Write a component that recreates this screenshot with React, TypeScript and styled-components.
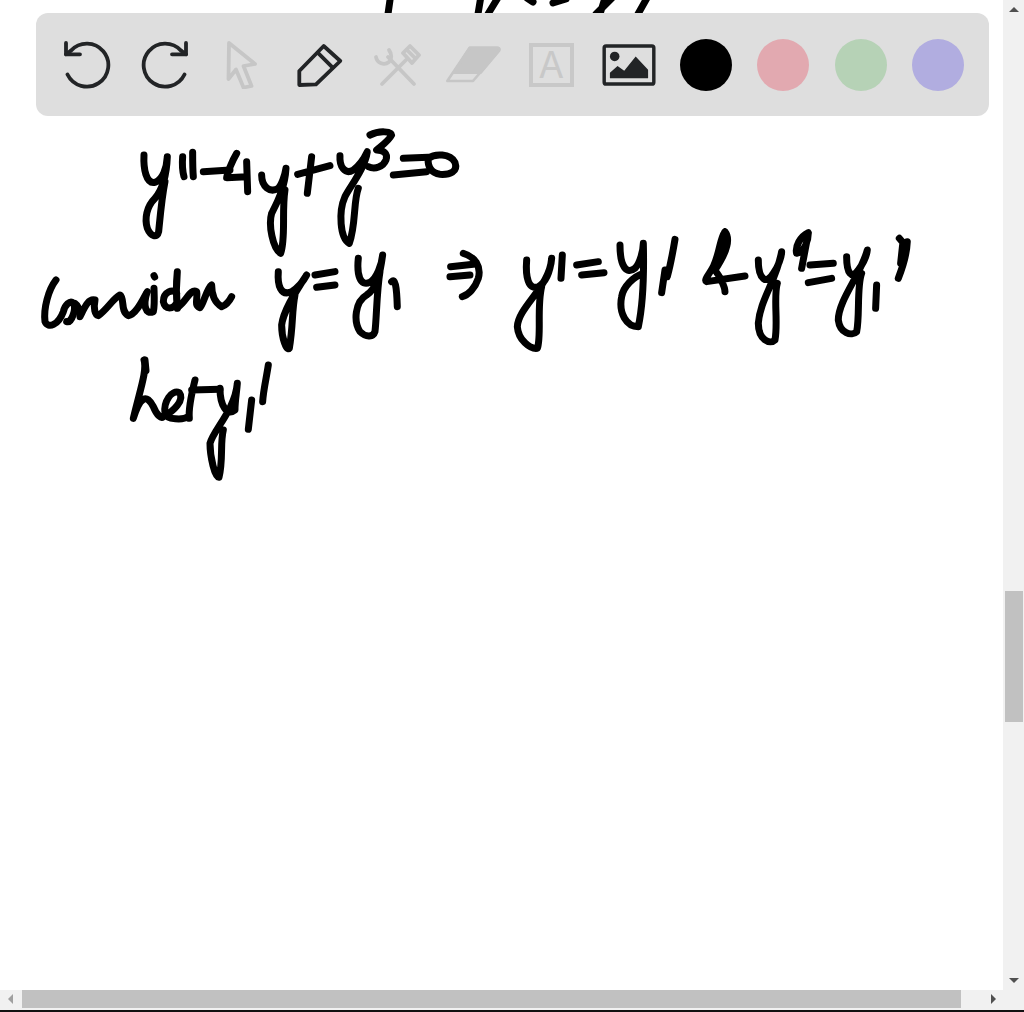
import React from 'react';
import styled, { createGlobalStyle } from 'styled-components';

const GlobalStyle = createGlobalStyle`
  html, body {
    margin: 0;
    padding: 0;
    overflow: hidden;
    background: #fff;
    font-family: "Liberation Sans", Arial, sans-serif;
  }
`;

const Frame = styled.div`
  width: 1024px;
  height: 1012px;
  display: flex;
  flex-direction: column;
  overflow: hidden;
`;

const Body = styled.div`
  flex: 1;
  min-height: 0;
  display: flex;
`;

const Board = styled.main`
  flex: 1;
  position: relative;
  overflow: hidden;
  background: #fff;
`;

const Ink = styled.svg`
  display: block;
  width: 1003px;
  height: 990px;
  fill: none;
  stroke: #000;
  stroke-linecap: round;
  stroke-linejoin: round;
`;

const Toolbar = styled.div`
  position: absolute;
  top: 13px;
  left: 36px;
  width: 953px;
  height: 103px;
  box-sizing: border-box;
  padding-left: 12.5px;
  display: flex;
  align-items: center;
  background: #dedede;
  border-radius: 12px;
`;

const Tool = styled.div`
  width: 77.35px;
  height: 52px;
  flex: none;
  display: flex;
  align-items: center;
  justify-content: center;
`;

const Icon = styled.svg<{ $muted?: boolean }>`
  display: block;
  fill: none;
  stroke: ${p => (p.$muted ? '#c6c6c6' : '#222426')};
  stroke-width: 3.8;
  stroke-linecap: round;
  stroke-linejoin: round;
`;

const TextTool = styled.div`
  width: 45px;
  height: 44px;
  box-sizing: border-box;
  border: 4px solid #c8c8c8;
  display: flex;
  align-items: center;
  justify-content: center;
  color: #c8c8c8;
  font-family: Inter, sans-serif;
  font-weight: 400;
  font-size: 37px;
  line-height: 1;
`;

const Swatch = styled.div<{ $color: string }>`
  width: 52px;
  height: 52px;
  border-radius: 50%;
  background: ${p => p.$color};
`;

const VerticalBar = styled.div`
  width: 21px;
  flex: none;
  display: flex;
  flex-direction: column;
  align-items: center;
  background: #f1f1f1;
`;

const VerticalThumb = styled.div`
  width: 18px;
  height: 131px;
  margin-top: 571px;
  background: #c1c1c1;
`;

const ArrowBox = styled.div<{ $end?: boolean }>`
  flex: none;
  width: 21px;
  height: 20px;
  display: flex;
  align-items: center;
  justify-content: center;
  margin-top: ${p => (p.$end ? 'auto' : '0')};
`;

const HorizontalBar = styled.div`
  height: 20px;
  flex: none;
  display: flex;
  align-items: flex-start;
  background: #f1f1f1;
`;

const HorizontalThumb = styled.div`
  width: 939px;
  height: 18px;
  background: #c1c1c1;
`;

const SideArrow = styled.div<{ $wide?: boolean }>`
  flex: none;
  width: ${p => (p.$wide ? '42px' : '22px')};
  height: 18px;
  display: flex;
  align-items: center;
  justify-content: ${p => (p.$wide ? 'flex-start' : 'center')};
  padding-left: ${p => (p.$wide ? '27px' : '0')};
  box-sizing: border-box;
`;

const BottomEdge = styled.div`
  height: 2px;
  flex: none;
  background: #111;
`;

const Arrow = ({ dir, color = '#505050' }: { dir: 'up' | 'down' | 'left' | 'right'; color?: string }) => {
  const points = {
    up: '0,7 5,2 10,7',
    down: '0,3 10,3 5,8',
    left: '7,0 7,10 2,5',
    right: '3,0 3,10 8,5',
  }[dir];
  return (
    <svg width="10" height="10" viewBox="0 0 10 10">
      <polygon points={points} fill={color} />
    </svg>
  );
};

const Undo = () => (
  <Icon width="48" height="48" viewBox="0 0 48 48">
    <path d="M4.5 33.5A21.5 21.5 0 1 0 8 9.6L3 13.3" />
    <path d="M3 2v11.3h14" />
  </Icon>
);

const Redo = () => (
  <Icon width="48" height="48" viewBox="0 0 48 48">
    <path d="M43.5 33.5A21.5 21.5 0 1 1 40 9.6L45 13.3" />
    <path d="M45 2v11.3H31" />
  </Icon>
);

const Pointer = () => (
  <Icon $muted width="48" height="48" viewBox="0 0 48 48">
    <path d="M11 2 37 23 25.5 25 33.5 45 25.5 46.5 18 28.5 10.5 38Z" />
  </Icon>
);

const Pen = () => (
  <Icon width="48" height="48" viewBox="0 0 48 48">
    <path d="M4.3 30 28.7 5 45.3 20 21 43.3 4.3 44Z" />
    <path d="M22.7 11.7 37.7 26.7" />
  </Icon>
);

const Tools = () => (
  <Icon $muted width="48" height="48" viewBox="0 0 48 48">
    <path d="M9 43 33 19" />
    <path d="M41 43 15 16" />
    <path d="M3 16c1 6 8 9 13 5 3-3 3-8 0-12" />
    <path d="M30 12 37 5l9 9-7 8Z" />
    <path d="M34 9 42 17" />
  </Icon>
);

const Eraser = () => (
  <Icon $muted width="56" height="48" viewBox="0 0 56 48">
    <path d="M23.7 6.7H51c2 0 3 1 2 3L27 40H1.3Z" strokeWidth="2.6" />
    <path d="M23.7 6.7H51c2 0 3 1 2 3L34.7 31.7H8Z" fill="#c6c6c6" strokeWidth="2.6" />
  </Icon>
);

const Picture = () => (
  <svg width="54" height="42" viewBox="0 0 56 44">
    <rect x="2" y="2" width="52" height="40" rx="2" fill="none" stroke="#222426" strokeWidth="3.6" />
    <circle cx="13" cy="13" r="5" fill="#222426" />
    <path d="M8 36V30L16 23 23 28 35 13 48 27V36Z" fill="#222426" />
  </svg>
);

const swatches = ['#000000', '#e2a9b0', '#b6d2b6', '#b1ade0'];

// strokes of each group are written in the coordinates of a 3x crop
const lineOne = [
  'M342 90C340 130 348 178 375 172 398 165 410 130 412 95 410 150 400 190 375 220 350 245 343 280 352 310 362 335 382 340 386 320 390 280 395 220 405 170',
  'M458 95C456 120 458 140 462 155M488 82C488 110 488 135 490 155',
  'M520 140 600 135',
  'M620 85C605 110 592 145 590 158L650 155M650 110 653 200',
  'M695 150C695 185 720 205 745 190 755 180 765 150 768 130 765 190 740 235 725 265 715 300 728 370 752 385 768 340 755 260 765 195',
  'M803 148 900 122M845 95 832 205',
  'M930 92C928 125 945 150 970 135 990 120 1005 95 1012 80 1005 130 960 185 945 215 925 260 930 340 958 355 978 300 970 230 985 190',
  'M1020 30C1050 15 1085 20 1085 30 1075 50 1050 65 1040 75 1060 75 1075 85 1068 105 1060 125 1035 135 1015 125',
  'M1120 100 1195 97M1090 150 1190 140',
  'M1195 100C1215 85 1260 85 1275 112 1285 140 1260 150 1230 148 1205 145 1192 125 1195 100',
];

const lineTwo = [
  'M78 465C55 495 40 550 45 590 55 612 85 600 100 560 105 540 120 525 130 535 140 550 125 595 110 590',
  'M135 535C150 545 150 565 150 575 165 545 175 520 195 525 190 550 195 570 205 572 230 555 250 520 270 510 285 520 270 560 295 572 320 570 345 510 352 500',
  'M350 505C340 540 345 570 370 560 375 540 372 500 372 490',
  'M372 452 374 456',
  'M442 440C438 480 440 530 442 550M440 505C430 490 400 500 400 530 405 555 430 555 442 530',
  'M442 548C470 530 480 490 500 500 505 520 490 540 510 548 520 540 530 490 545 480 545 500 550 530 575 545 590 540 600 525 605 515',
  'M745 440C742 480 752 515 785 500 810 485 822 465 830 450 790 510 760 560 755 600 755 640 770 680 778 670 790 600 785 560 795 510',
  'M855 450 915 440M860 487 915 480',
  'M985 400C980 450 990 485 1020 472 1040 460 1055 420 1058 390 1050 450 1040 490 1010 510 975 530 970 590 990 620 1010 640 1030 635 1035 620 1040 580 1040 500 1050 440',
  'M1085 470C1095 460 1100 480 1102 545',
  'M1262 425 1330 418M1260 455 1320 450',
  'M1300 385C1335 395 1355 425 1345 460 1335 490 1315 510 1297 515',
];

const lineTwoEnd = [
  'M140 90C136 140 145 182 175 170 195 158 210 130 215 85 210 170 115 230 112 290 115 330 150 358 172 355 185 320 170 230 185 170',
  'M247 75 243 145',
  'M290 105 355 95M305 135 372 128',
  'M420 45C420 110 440 135 465 115 480 100 490 60 490 40 492 120 492 210 475 290 440 290 415 250 425 200 430 170 460 140 490 130',
  'M555 120 545 188M585 28C578 70 570 110 562 140',
  'M735 5C718 30 722 60 700 110 690 130 670 150 680 155L795 138M735 5C755 30 735 75 705 120 720 140 735 170 735 185',
  'M835 90C835 150 860 165 880 130 895 110 905 80 905 65 890 150 840 210 835 280 835 330 870 345 885 330 895 280 880 200 892 160',
  'M985 8C960 20 945 50 950 70 975 65 985 30 985 10L965 115',
  'M990 105 1060 100M985 158 1055 145',
  'M1100 80C1100 130 1115 150 1135 120 1150 100 1160 80 1162 60 1145 130 1075 210 1075 270 1080 310 1115 320 1130 305 1140 260 1130 170 1145 130',
  'M1190 165 1187 235',
  'M1258 25 1275 45M1282 35C1280 80 1265 120 1255 145M1268 45 1262 100',
];

const lineThree = [
  'M72 30C82 60 60 120 40 205 60 140 80 130 100 170 110 195 125 210 132 198 160 185 195 150 178 128 155 118 130 155 135 190 140 210 190 210 205 200',
  'M75 30 78 62',
  'M225 90C215 130 205 175 208 205M215 120 300 118',
  'M300 115C300 165 320 200 345 180 345 150 350 130 352 100 345 180 280 240 270 280 270 320 285 385 297 382 310 330 300 280 310 240',
  'M395 150 385 238',
  'M445 45C440 80 430 120 428 155',
];

// bottom of the line hidden above the toolbar
const topSliver = [
  'M390 0 388 14',
  'M481 -4 478 14M499 -4 488 14',
  'M527 -2 533 2M553 3 566 -1',
  'M612 -2 596 14M605 -2 600 14M647 -2 638 14',
];

const App = () => {
  return (
    <Frame>
      <GlobalStyle />
      <Body>
        <Board>
          <Ink viewBox="0 0 1003 990">
            <g strokeWidth="7">
              {topSliver.map((d, i) => <path key={i} d={d} />)}
            </g>
            <g transform="translate(30 125) scale(.3333)" strokeWidth="21">
              {lineOne.map((d, i) => <path key={i} d={d} />)}
              {lineTwo.map((d, i) => <path key={i} d={d} />)}
            </g>
            <g transform="translate(480 230) scale(.3333)" strokeWidth="21">
              {lineTwoEnd.map((d, i) => <path key={i} d={d} />)}
            </g>
            <g transform="translate(120 350) scale(.3333)" strokeWidth="21">
              {lineThree.map((d, i) => <path key={i} d={d} />)}
            </g>
          </Ink>
          <Toolbar>
            <Tool><Undo /></Tool>
            <Tool><Redo /></Tool>
            <Tool><Pointer /></Tool>
            <Tool><Pen /></Tool>
            <Tool><Tools /></Tool>
            <Tool><Eraser /></Tool>
            <Tool><TextTool>A</TextTool></Tool>
            <Tool><Picture /></Tool>
            {swatches.map(color => (
              <Tool key={color}><Swatch $color={color} /></Tool>
            ))}
          </Toolbar>
        </Board>
        <VerticalBar>
          <ArrowBox><Arrow dir="up" /></ArrowBox>
          <VerticalThumb />
          <ArrowBox $end><Arrow dir="down" /></ArrowBox>
        </VerticalBar>
      </Body>
      <HorizontalBar>
        <SideArrow><Arrow dir="left" color="#a0a0a0" /></SideArrow>
        <HorizontalThumb />
        <SideArrow $wide><Arrow dir="right" /></SideArrow>
      </HorizontalBar>
      <BottomEdge />
    </Frame>
  );
};

export default App;
